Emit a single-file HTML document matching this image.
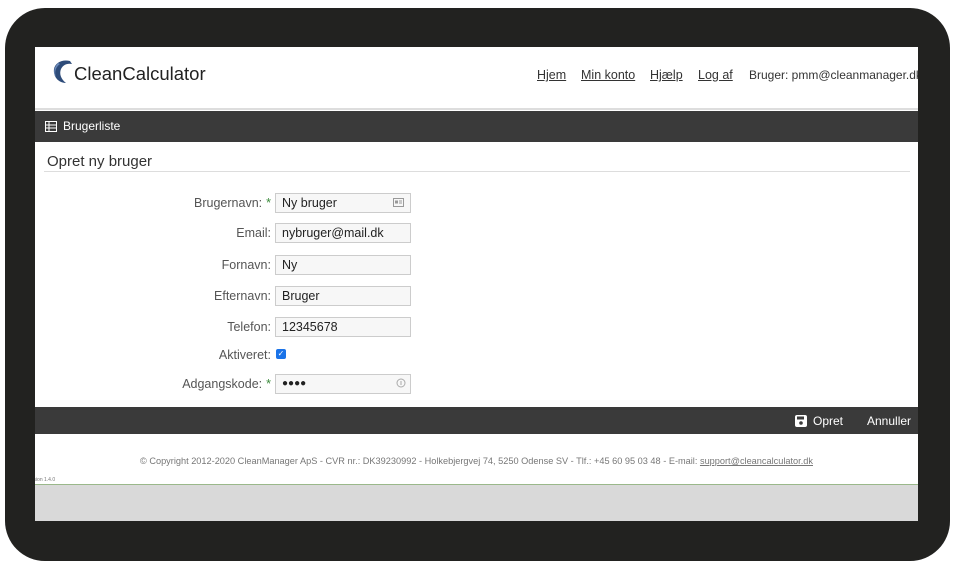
<!DOCTYPE html>
<html><head><meta charset="utf-8">
<style>
*{margin:0;padding:0;box-sizing:border-box}
body{width:954px;height:567px;background:#fff;font-family:"Liberation Sans",sans-serif;position:relative;overflow:hidden}
.frame{position:absolute;left:5px;top:8px;width:945px;height:553px;background:#222220;border-radius:40px}
.screen{position:absolute;left:35px;top:47px;width:883px;height:474px;background:#fff;overflow:hidden}
.abs{position:absolute;white-space:nowrap}
.nav a{color:#333;text-decoration:underline;font-size:12.5px;position:absolute;top:21px;white-space:nowrap}
.bar{background:#3a3a3a;color:#fff;position:absolute;left:0;width:883px}
.row{position:absolute;left:0;width:883px;height:20px}
.row .l{position:absolute;right:647px;top:3px;font-size:12.5px;color:#555;white-space:nowrap}
.row .l b{color:#3a8a3a;font-weight:normal;margin-left:4px}
.inp{position:absolute;left:240px;top:0;width:136px;height:20px;border:1px solid #ccc;background:#f7f7f7;font-size:12.5px;line-height:18px;color:#222;padding:0 6px;white-space:nowrap}
</style></head><body>
<div class="frame"></div>
<div class="screen">
  <div class="abs" style="left:0;top:0;width:883px;height:63px;border-bottom:2px solid #ddd"></div>
  <svg class="abs" style="left:15px;top:12px" width="24" height="26" viewBox="0 0 24 26">
    <path d="M20 2 C12 0 5 4 4 10 C3 17 8 24 16 24 C11 20 9 15 11 10 C13 6 17 4 22 5 Z" fill="#2e4c7a"/>
    <path d="M8 4 C4 8 3 14 6 19 C4 12 6 8 10 5Z" fill="#6a88b8"/>
  </svg>
  <div class="abs" style="left:39px;top:16px;font-size:18.5px;color:#222">CleanCalculator</div>
  <div class="nav">
    <a style="left:502px">Hjem</a>
    <a style="left:546px">Min konto</a>
    <a style="left:615px">Hjælp</a>
    <a style="left:663px">Log af</a>
    <span style="position:absolute;left:714px;top:21px;font-size:12px;color:#333;white-space:nowrap">Bruger: pmm@cleanmanager.dk</span>
  </div>
  <div class="bar" style="top:64px;height:31px">
    <svg class="abs" style="left:10px;top:10px" width="12" height="11" viewBox="0 0 12 11"><rect x=".5" y=".5" width="11" height="10" fill="none" stroke="#fff"/><path d="M.5 4h11M.5 7h11M4 .5v10" stroke="#fff"/></svg>
    <span class="abs" style="left:28px;top:8px;font-size:12px">Brugerliste</span>
  </div>
  <div class="abs" style="left:12px;top:106px;font-size:15px;color:#333">Opret ny bruger</div>
  <div class="abs" style="left:9px;top:124px;width:866px;height:1px;background:#ddd"></div>

  <div class="row" style="top:146px"><span class="l">Brugernavn:<b>*</b></span><div class="inp">Ny bruger</div>
    <svg class="abs" style="left:358px;top:5px" width="11" height="9" viewBox="0 0 11 9"><rect x=".5" y=".5" width="10" height="8" fill="none" stroke="#999"/><rect x="2" y="2.5" width="3" height="3" fill="#999"/><path d="M6 3h3M6 5h3" stroke="#999"/></svg></div>
  <div class="row" style="top:176px"><span class="l">Email:</span><div class="inp">nybruger@mail.dk</div></div>
  <div class="row" style="top:208px"><span class="l">Fornavn:</span><div class="inp">Ny</div></div>
  <div class="row" style="top:239px"><span class="l">Efternavn:</span><div class="inp">Bruger</div></div>
  <div class="row" style="top:270px"><span class="l">Telefon:</span><div class="inp">12345678</div></div>
  <div class="row" style="top:298px"><span class="l">Aktiveret:</span>
    <div class="abs" style="left:241px;top:4px;width:10px;height:10px;background:#1a73e8;border-radius:2px;color:#fff;font-size:8px;line-height:10px;text-align:center">✓</div></div>
  <div class="row" style="top:327px"><span class="l">Adgangskode:<b>*</b></span><div class="inp" style="font-size:10px">●●●●</div>
    <svg class="abs" style="left:361px;top:3px" width="10" height="13" viewBox="0 0 10 13"><circle cx="5" cy="6" r="4" fill="none" stroke="#aaa"/><path d="M5 4v4" stroke="#aaa"/></svg></div>

  <div class="bar" style="top:360px;height:27px">
    <svg class="abs" style="left:760px;top:8px" width="12" height="12" viewBox="0 0 12 12"><rect width="12" height="12" rx="2" fill="#fff"/><rect x="2" y="1.5" width="7" height="3" fill="#3a3a3a"/><circle cx="6" cy="8" r="1.8" fill="#3a3a3a"/></svg>
    <span class="abs" style="left:778px;top:7px;font-size:12px">Opret</span>
    <span class="abs" style="left:832px;top:7px;font-size:12px">Annuller</span>
  </div>
  <div class="abs" style="left:0;top:409px;width:883px;text-align:center;font-size:9.2px;color:#777">© Copyright 2012-2020 CleanManager ApS - CVR nr.: DK39230992 - Holkebjergvej 74, 5250 Odense SV - Tlf.: +45 60 95 03 48 - E-mail: <u>support@cleancalculator.dk</u></div>
  <div class="abs" style="left:-6px;top:430px;font-size:5px;color:#777">ersion 1.4.0</div>
  <div class="abs" style="left:0;top:437px;width:883px;height:1px;background:#9ab88a"></div>
  <div class="abs" style="left:0;top:438px;width:883px;height:36px;background:#d9d9d9"></div>
</div>
</body></html>
